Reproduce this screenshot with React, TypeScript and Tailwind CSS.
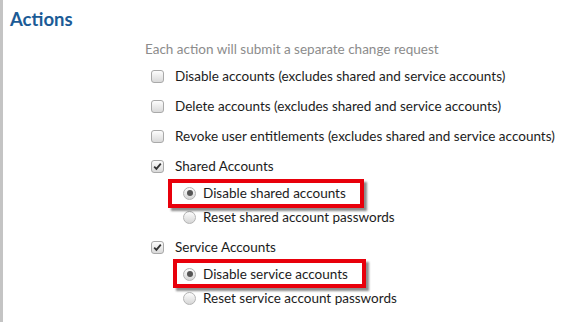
import type { ReactNode } from 'react';

const font = { fontFamily: 'Lato, "Open Sans", sans-serif' };

function Checkbox({ checked = false }: { checked?: boolean }) {
    return (
        <span className="ml-[6px] flex h-[13px] w-[13px] shrink-0 items-center justify-center rounded-[3px] border border-[#a9a9a9] bg-linear-to-b from-[#fdfdfd] to-[#d9d9d9]">
            {checked && (
                <svg width="9" height="9" viewBox="0 0 9 9">
                    <path d="M1.2 4.6 L3.4 6.8 L7.8 1.6" fill="none" stroke="#333" strokeWidth="1.8" />
                </svg>
            )}
        </span>
    );
}

function Radio({ checked = false }: { checked?: boolean }) {
    return (
        <span className="ml-[38px] flex h-[13px] w-[13px] shrink-0 items-center justify-center rounded-full border border-[#b4b4b4] bg-linear-to-b from-[#fdfdfd] to-[#d6d6d6]">
            {checked && <span className="h-[6px] w-[6px] rounded-full bg-[#555]" />}
        </span>
    );
}

function CheckRow({ checked, children }: { checked?: boolean; children: ReactNode }) {
    return (
        <div className="flex h-[30px] items-center gap-[11px]">
            <Checkbox checked={checked} />
            <span>{children}</span>
        </div>
    );
}

function RadioRow({ checked, children }: { checked?: boolean; children: ReactNode }) {
    return (
        <div className="flex h-[24px] items-center gap-[7px]">
            <Radio checked={checked} />
            <span>{children}</span>
        </div>
    );
}

export default function App() {
    return (
        <div
            className="relative h-[322px] w-[578px] overflow-hidden border-l-[3px] border-[#c4c4c4] bg-white"
            style={font}
        >
            <h2 className="pt-[9px] pl-[7px] text-[18.5px] leading-[20px] font-bold text-[#1b5b96]">
                Actions
            </h2>

            <div className="ml-[142px] text-[13.5px] text-[#1c1c1c]">
                <p className="mt-[10px] h-[20px] leading-[20px] text-[#8c8c8c]">
                    Each action will submit a separate change request
                </p>
                <div className="mt-[2px]">
                    <CheckRow>Disable accounts (excludes shared and service accounts)</CheckRow>
                    <CheckRow>Delete accounts (excludes shared and service accounts)</CheckRow>
                    <CheckRow>Revoke user entitlements (excludes shared and service accounts)</CheckRow>
                    <CheckRow checked>Shared Accounts</CheckRow>
                    <RadioRow checked>Disable shared accounts</RadioRow>
                    <RadioRow>Reset shared account passwords</RadioRow>
                    <div className="mt-[3px]">
                        <CheckRow checked>Service Accounts</CheckRow>
                    </div>
                    <RadioRow checked>Disable service accounts</RadioRow>
                    <RadioRow>Reset service account passwords</RadioRow>
                </div>
            </div>

            {/* annotation boxes */}
            <div className="absolute top-[179px] left-[165px] h-[29px] w-[196px] border-4 border-[#e8000b] shadow-[3px_3px_2px_rgba(0,0,0,0.45)]" />
            <div className="absolute top-[259px] left-[170px] h-[29px] w-[193px] border-4 border-[#e8000b] shadow-[3px_3px_2px_rgba(0,0,0,0.45)]" />
        </div>
    );
}
